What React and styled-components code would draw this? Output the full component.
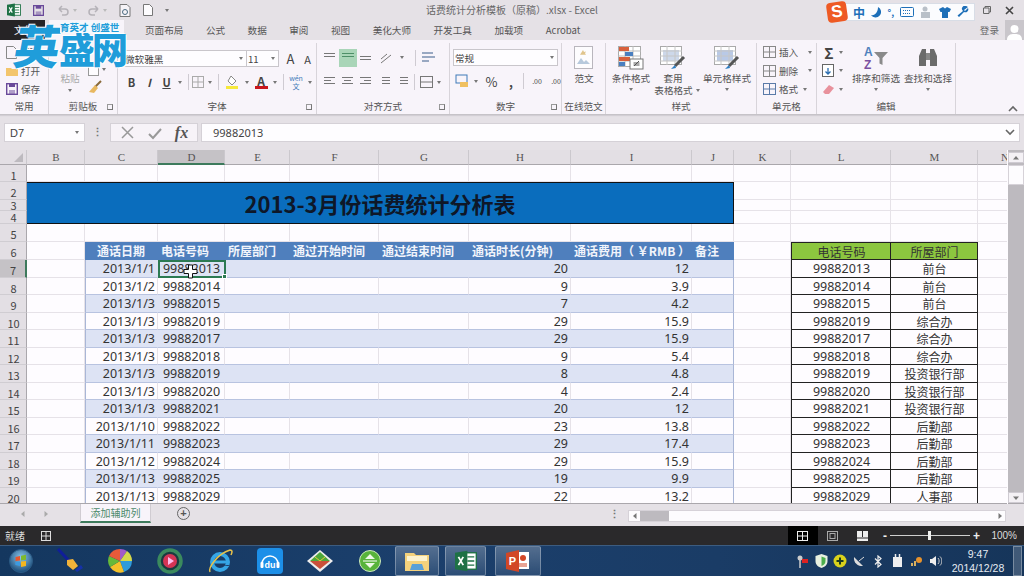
import React from "react"
import styled, { createGlobalStyle } from "styled-components"

const GlobalStyle = createGlobalStyle`
  html, body { margin: 0; padding: 0; background: #e5e1e6; }
  * { box-sizing: border-box; }
`

const CJK = `"Noto Sans CJK SC", "Noto Sans", sans-serif`

const Page = styled.div`
  position: relative;
  width: 1024px;
  height: 576px;
  overflow: hidden;
  display: flex;
  flex-direction: column;
  background: #e5e1e6;
  font-family: ${CJK};
  color: #444;
`

// title bar
const TitleBar = styled.div`
  height: 20px;
  display: flex;
  align-items: center;
  padding-left: 6px;
  position: relative;
`
const QuickIcon = styled.span`
  display: flex;
  width: ${p => p.$w || 16}px;
  margin-left: ${p => p.$ml || 0}px;
  justify-content: center;
`
const TitleText = styled.div`
  position: absolute;
  left: 0;
  right: 0;
  top: 2px;
  text-align: center;
  font-size: 10px;
  line-height: 15px;
  color: #666;
`
const WindowButtons = styled.div`
  margin-left: auto;
  display: flex;
  width: 41px;
  gap: 14px;
  align-items: center;
`

// tabs
const TabRow = styled.div`
  height: 20px;
  display: flex;
  align-items: center;
  font-size: 9.6px;
  color: #555;
`
const FileTab = styled.div`
  width: 45px;
  height: 20px;
  background: #262426;
  color: #eee;
  line-height: 20px;
  padding-left: 14px;
  font-size: 10px;
`
const ActiveTab = styled.div`
  width: 75px;
  height: 20px;
  background: #f8f4fa;
  margin-left: 4px;
  margin-right: 21px;
`
const TabList = styled.div`
  display: flex;
  gap: 22.5px;
`
const Login = styled.div`
  margin-left: auto;
  display: flex;
  align-items: center;
  gap: 6px;
  font-size: 9.6px;
  color: #666;
`
const Avatar = styled.div`
  width: 19px;
  height: 20px;
  background: #c9c6cb;
  display: flex;
  align-items: flex-end;
  justify-content: center;
`

// ribbon
const Ribbon = styled.div`
  height: 75px;
  flex: none;
  display: flex;
  background: #f8f4fa;
  padding: 3px 0 0;
  border-bottom: 1px solid #c6c3c8;
  box-shadow: 0 1px 1px #d2ced4;
  position: relative;
`
const Group = styled.div`
  width: ${p => p.$w}px;
  flex: none;
  height: 71px;
  display: flex;
  flex-direction: column;
  position: relative;
  border-right: 1px solid #d8d4da;
`
const GroupBody = styled.div`
  flex: 1;
  min-height: 0;
  display: flex;
  flex-direction: ${p => p.$dir || "row"};
  gap: ${p => p.$gap || 0}px;
  padding: ${p => p.$pad || "0"};
`
const SideStack = styled.div`
  flex: none;
  width: 28px;
  display: flex;
  flex-direction: column;
`
const GroupLabel = styled.div`
  height: 14px;
  line-height: 13px;
  text-align: center;
  font-size: 9.6px;
  color: #555;
`
const Launcher = styled.span`
  position: absolute;
  right: 4px;
  bottom: 4px;
  width: 6px;
  height: 6px;
  border-left: 1px solid #999;
  border-top: 1px solid #999;
  border-right: 1px solid #777;
  border-bottom: 1px solid #777;
`
const CmdRow = styled.div`
  display: flex;
  align-items: center;
  flex: none;
  height: ${p => p.$h || 18.5}px;
  gap: ${p => p.$gap || 0}px;
  font-size: 9.6px;
  color: #555;
`
const Slot = styled.span`
  display: flex;
  flex-direction: ${p => (p.$stack ? "column" : "row")};
  align-items: center;
  justify-content: center;
  flex: none;
  width: ${p => p.$w || 18}px;
  height: ${p => p.$h || 18}px;
  margin-left: ${p => p.$ml || 0}px;
  background: ${p => (p.$on ? "#a9d5b8" : "transparent")};
  font-size: ${p => p.$fs || 11}px;
  line-height: ${p => (p.$stack ? `${p.$lh || 11}px` : "normal")};
  font-weight: ${p => (p.$bold ? 700 : 400)};
  font-style: ${p => (p.$it ? "italic" : "normal")};
  text-decoration: ${p => (p.$ul ? "underline" : "none")};
  color: ${p => p.$color || "#444"};
`
const Caret = styled.span`
  flex: none;
  width: 0;
  height: 0;
  margin: ${p => p.$m || "0 3px"};
  border-left: 2.5px solid transparent;
  border-right: 2.5px solid transparent;
  border-top: 3px solid ${p => p.$c || "#777"};
`
const Divider = styled.span`
  flex: none;
  width: 1px;
  height: 16px;
  margin: 0 3px 0 ${p => p.$ml || 3}px;
  background: #cfcbd2;
`
const Select = styled.div`
  width: ${p => p.$w}px;
  height: 17px;
  flex: none;
  background: #fefdff;
  border: 1px solid #c9c6cb;
  border-left: ${p => (p.$joined ? "none" : "1px solid #c9c6cb")};
  display: flex;
  align-items: center;
  justify-content: space-between;
  padding: 0 3px 0 1px;
  font-size: 9.6px;
  color: #444;
`
const BigCmd = styled.div`
  width: ${p => p.$w}px;
  flex: none;
  display: flex;
  flex-direction: column;
  align-items: center;
  font-size: 9.6px;
  line-height: 12px;
  white-space: nowrap;
  color: ${p => (p.$muted ? "#aaa" : "#555")};
`
const BigIcon = styled.div`
  height: 28px;
  display: flex;
  align-items: center;
  justify-content: center;
  margin-top: 1px;
`
const CaretLine = styled.span`
  display: flex;
  align-items: center;
`
const Collapse = styled.div`
  position: absolute;
  right: 6px;
  bottom: 2px;
  display: flex;
`

// formula bar
const FormulaBar = styled.div`
  height: 35px;
  flex: none;
  padding: 8px 4px;
  display: flex;
  align-items: stretch;
  font-size: 11px;
  color: #444;
`
const NameBox = styled.div`
  width: 81px;
  background: #fefdff;
  border: 1px solid #d5d1d7;
  display: flex;
  align-items: center;
  justify-content: space-between;
  padding: 0 5px;
  font-family: "Liberation Sans", sans-serif;
`
const Dots = styled.div`
  width: 25px;
  text-align: center;
  color: #777;
  line-height: 17px;
  font-weight: 700;
`
const FxBox = styled.div`
  width: 88px;
  background: #f7f3f8;
  border: 1px solid #d5d1d7;
  display: flex;
  align-items: center;
  justify-content: space-around;
  margin-right: 3px;
  font-family: "Liberation Serif", serif;
  font-style: italic;
  font-size: 16px;
  font-weight: 700;
  color: #555;
  padding: 0 3px;
`
const FormulaInput = styled.div`
  flex: 1;
  background: #fefdff;
  border: 1px solid #d5d1d7;
  display: flex;
  align-items: center;
  justify-content: space-between;
  padding: 0 4px 0 11px;
  font-family: "Noto Sans", sans-serif;
  font-size: 11px;
`

// sheet
const SheetArea = styled.div`
  height: 354px;
  flex: none;
  display: flex;
  background: #fefcff;
`
const SheetClip = styled.div`
  width: 1007px;
  flex: none;
  overflow: hidden;
  position: relative;
  border-bottom: 1px solid #aaa7ac;
`
const Sheet = styled.div`
  display: grid;
  width: 1061px;
  grid-template-columns: 27px 58px 73px 67px 65px 89px 90px 102px 121px 42px 57px 100px 87px 54px;
  grid-template-rows: 15px 17px 18px 11px 13px 18px 18px repeat(14, 17.5px);
`
const ColHead = styled.div`
  background: ${p => (p.$on ? "#c5c2c6" : "#e3dfe4")};
  border-right: 1px solid #cbc8cd;
  border-bottom: ${p => (p.$on ? "2px solid #3d7a5c" : "1px solid #aaa7ac")};
  text-align: center;
  padding-left: 1px;
  font-family: "Liberation Serif", serif;
  font-size: 11px;
  line-height: 15px;
  color: #555;
`
const Corner = styled(ColHead)`
  display: flex;
  justify-content: flex-end;
  align-items: flex-end;
  padding: 0 3px 2px 0;
`
const RowHead = styled.div`
  background: ${p => (p.$on ? "#c5c2c6" : "#e3dfe4")};
  border-right: ${p => (p.$on ? "2px solid #3d7a5c" : "1px solid #aaa7ac")};
  border-bottom: 1px solid #d0cdd2;
  text-align: center;
  font-size: 11px;
  line-height: ${p => p.$lh || 18}px;
  padding-left: 1px;
  padding-top: ${p => (p.$lh ? 0 : 1)}px;
  color: #444;
`
const Cell = styled.div`
  border-right: 1px solid #e6e2e8;
  border-bottom: 1px solid #e6e2e8;
  overflow: hidden;
  white-space: nowrap;
  font-size: 12.5px;
  line-height: 17px;
  color: #333;
  font-family: "Noto Sans", sans-serif;
  text-align: ${p => p.$align || "left"};
  padding: 0 2px 0 3px;
`
const Banner = styled.div`
  grid-column: span 9;
  grid-row: span 3;
  background: #0a6dbd;
  border: 1.5px solid #111;
  border-left: none;
  display: flex;
  align-items: center;
  justify-content: center;
  font-size: 22px;
  font-weight: 700;
  color: #0e1728;
`
const HeadCell = styled(Cell)`
  background: #4f7fbd;
  color: #f1f4fb;
  font-family: ${CJK};
  font-size: 12px;
  font-weight: 700;
  padding: 0 0 0 ${p => p.$indent || 3}px;
  border-color: #4f7fbd;
`
const BodyCell = styled(Cell)`
  background: ${p => (p.$alt ? "#dde3f4" : "#fefcff")};
  border-bottom: 1px solid #b8c3e0;
  border-right: 1px solid ${p => (p.$alt ? "#dde3f4" : "#e6e2e8")};
  border-left: ${p => (p.$first ? "1px solid #a9b6d6" : "none")};
  ${p => p.$last && "border-right: 1px solid #a9b6d6;"}
`
const LookupHead = styled(Cell)`
  background: #8cc63f;
  font-family: ${CJK};
  font-size: 12px;
  color: #333;
  text-align: center;
  border: 1px solid #222;
  border-left: ${p => (p.$first ? "1px solid #222" : "none")};
`
const LookupCell = styled(Cell)`
  text-align: center;
  font-family: ${p => (p.$cjk ? CJK : `"Noto Sans", sans-serif`)};
  font-size: ${p => (p.$cjk ? 12 : 12.5)}px;
  border-right: 1px solid #222;
  border-bottom: 1px solid #222;
  border-left: ${p => (p.$first ? "1px solid #222" : "none")};
`
const Selection = styled.div`
  position: absolute;
  left: 158px;
  top: 110px;
  width: 68px;
  height: 18px;
  border: 2px solid #2c7a52;
  pointer-events: none;
`
const Handle = styled.span`
  position: absolute;
  right: -3px;
  bottom: -3px;
  width: 5px;
  height: 5px;
  background: #2c7a52;
  border: 1px solid #fff;
`
const CursorWrap = styled.div`
  position: absolute;
  left: 183px;
  top: 114px;
  display: flex;
`

// scroll bars
const VScroll = styled.div`
  flex: 1;
  margin-left: 1px;
  display: flex;
  flex-direction: column;
  background: #bdbabf;
  padding-top: 2px;
  border-bottom: 1px solid #aaa7ac;
`
const ScrollBtn = styled.div`
  height: 11px;
  flex: none;
  background: #f4f1f5;
  border: 1px solid #cfcbd2;
  display: flex;
  align-items: center;
  justify-content: center;
`
const VThumb = styled.div`
  height: 20px;
  flex: none;
  background: #fdfcfe;
  border: 1px solid #d6d2d8;
  margin-top: 2px;
`
const Spacer = styled.div`
  flex: 1;
`
const TabBar = styled.div`
  height: 22px;
  flex: none;
  display: flex;
  align-items: flex-start;
  background: #e5e1e6;
`
const Arrows = styled.div`
  width: 80px;
  display: flex;
  gap: 17px;
  height: 20px;
  align-items: center;
  padding-left: 20px;
`
const SheetTab = styled.div`
  width: 71px;
  height: 19px;
  background: #f8f4fa;
  border-bottom: 2px solid #3d7a5c;
  border-left: 1px solid #d0ccd2;
  border-right: 1px solid #d0ccd2;
  text-align: center;
  font-size: 10px;
  line-height: 17px;
  color: #4c8a6b;
`
const AddSheet = styled.div`
  margin: 3px 0 0 26px;
  width: 13px;
  height: 13px;
  border-radius: 50%;
  border: 1px solid #666;
  color: #555;
  display: flex;
  align-items: center;
  justify-content: center;
  font-size: 11px;
  line-height: 11px;
  font-family: "Liberation Sans", sans-serif;
  font-weight: 700;
`
const TabDots = styled.div`
  margin: 0 3px 0 414px;
  width: 21px;
  text-align: center;
  color: #777;
  font-size: 11px;
  line-height: 19px;
  font-weight: 700;
`
const HScroll = styled.div`
  width: 378px;
  height: 12px;
  margin-top: 6px;
  background: #fdfcfe;
  border: 1px solid #d6d2d8;
  display: flex;
  align-items: center;
`
const HBtn = styled.span`
  width: 11px;
  height: 10px;
  flex: none;
  display: flex;
  align-items: center;
  justify-content: center;
`
const HThumb = styled.span`
  width: 29px;
  height: 10px;
  flex: none;
  background: #bdbabf;
`

// status bar
const StatusBar = styled.div`
  height: 19px;
  flex: none;
  background: #2a292b;
  display: flex;
  align-items: center;
  padding-left: 5px;
  color: #ddd;
  font-size: 10px;
`
const MacroIcon = styled.span`
  display: flex;
  margin-left: 16px;
`
const ViewBtn = styled.div`
  width: ${p => p.$w || 30}px;
  height: 19px;
  background: ${p => (p.$on ? "#000" : "transparent")};
  display: flex;
  align-items: center;
  justify-content: center;
`
const ZoomSlider = styled.div`
  width: 80px;
  height: 1px;
  background: #cfcfcf;
  position: relative;
  margin: 0 3px;
`
const ZoomThumb = styled.span`
  position: absolute;
  left: 38px;
  top: -4px;
  width: 3px;
  height: 9px;
  background: #f0f0f0;
`
const ZoomText = styled.div`
  width: 44px;
  text-align: right;
  padding-right: 7px;
  font-family: "Liberation Sans", sans-serif;
  font-size: 10px;
`
const ZoomSign = styled.span`
  margin-left: ${p => p.$ml || 0}px;
  color: #eee;
  font-family: "Liberation Sans", sans-serif;
  font-size: 12px;
  font-weight: 700;
  line-height: 12px;
`

// taskbar
const Taskbar = styled.div`
  flex: 1;
  display: flex;
  align-items: center;
  background: linear-gradient(90deg, #14375f 0%, #1b3f6c 40%, #1a3c66 70%, #16355a 100%);
  border-top: 1px solid #3c5c80;
  padding-left: 6px;
`
const TaskSlot = styled.div`
  width: ${p => p.$w || 50}px;
  margin-right: ${p => p.$mr || 0}px;
  height: 30px;
  flex: none;
  display: flex;
  align-items: center;
  justify-content: center;
  ${p => p.$pinned && `
    background: linear-gradient(180deg, rgba(255,255,255,.25), rgba(255,255,255,.08));
    border: 1px solid rgba(255,255,255,.3);
    border-radius: 2px;
  `}
`
const Tray = styled.div`
  margin-left: auto;
  display: flex;
  align-items: center;
  gap: 3px;
`
const TrayIcon = styled.span`
  display: flex;
  width: 16px;
  justify-content: center;
`
const Clock = styled.div`
  width: 64px;
  text-align: center;
  color: #e6ebf2;
  font-family: "Liberation Sans", sans-serif;
  font-size: 10.5px;
  line-height: 14px;
`
const ShowDesktop = styled.div`
  width: 9px;
  height: 30px;
  margin-right: 2px;
  background: rgba(255,255,255,.18);
  border: 1px solid rgba(255,255,255,.3);
`

// overlays
const Logo = styled.div`
  position: absolute;
  left: 15px;
  top: 18px;
  width: 112px;
  height: 50px;
  color: #1f9dda;
  font-family: ${CJK};
  font-weight: 900;
  pointer-events: none;
`
const LogoBig = styled.span`
  position: absolute;
  left: ${p => p.$x}px;
  top: ${p => p.$y}px;
  font-size: ${p => p.$s}px;
  line-height: ${p => p.$s}px;
  transform: ${p => (p.$slant ? "skewX(-10deg)" : "none")};
  text-shadow: 1px 1px 0 #fff, -1px -1px 0 #fff;
`
const LogoSmall = styled.span`
  position: absolute;
  left: 45px;
  top: 4px;
  font-size: 9.5px;
  line-height: 11px;
  font-weight: 700;
  white-space: nowrap;
  background: #f4f9fc;
`
const Sogou = styled.div`
  position: absolute;
  left: 827px;
  top: 2px;
  width: 148px;
  height: 20px;
  display: flex;
  align-items: center;
  pointer-events: none;
`
const SogouMark = styled.div`
  width: 20px;
  height: 20px;
  border-radius: 4px;
  background: #ee5a24;
  color: #fff;
  font-family: "Liberation Sans", sans-serif;
  font-weight: 700;
  font-size: 17px;
  line-height: 19px;
  text-align: center;
  transform: rotate(-8deg);
  flex: none;
  z-index: 1;
`
const SogouBar = styled.div`
  flex: 1;
  height: 18px;
  margin-left: -2px;
  background: #fbfcfe;
  border: 1px solid #d8dde6;
  display: flex;
  align-items: center;
  justify-content: space-around;
  padding: 0 2px 0 4px;
  color: #1d6fb8;
  font-size: 12px;
  font-weight: 700;
`
const SogouPunct = styled.span`
  font-size: 9px;
`

// icons
const Svg = ({ w = 14, h = 14, vb, children }) => (
  <svg width={w} height={h} viewBox={vb || `0 0 ${w} ${h}`} fill="none">{children}</svg>
)
const Lines = ({ widths, on }) => (
  <Svg w={14} h={12}>
    {widths.map(([x, w], i) => (
      <rect key={i} x={x} y={1 + i * 3} width={w} height="1" fill={on ? "#4d8f68" : "#777"} />
    ))}
  </Svg>
)
const Save = ({ c = "#6a4a9a", s = 12 }) => (
  <Svg w={s} h={s} vb="0 0 12 12">
    <rect x=".7" y=".7" width="10.6" height="10.6" stroke={c} strokeWidth="1.4" />
    <rect x="3" y="1" width="6" height="3" fill={c} />
    <rect x="3" y="7" width="6" height="4" fill={c} opacity=".5" />
  </Svg>
)
const SmallGrid = ({ w = 14, h = 14, c = "#888", fill }) => (
  <Svg w={w} h={h}>
    <rect x=".5" y=".5" width={w - 1} height={h - 1} stroke={c} fill={fill || "none"} />
    <path d={`M${w / 2} 0V${h}M0 ${h / 2}H${w}`} stroke={c} />
  </Svg>
)
const ExcelMark = ({ s = 14 }) => (
  <Svg w={s} h={s} vb="0 0 16 16">
    <rect x="7" y="2" width="8.5" height="12" fill="#fff" stroke="#1e7145" />
    <path d="M9 5h5M9 8h5M9 11h5" stroke="#1e7145" />
    <path d="M0 2l9-1.5v15L0 14z" fill="#1e7145" />
    <path d="M2.5 5l3.5 6M6 5l-3.5 6" stroke="#fff" strokeWidth="1.3" />
  </Svg>
)
const Chevron = ({ up, c = "#666" }) => (
  <Svg w={10} h={7}>
    <path d={up ? "M1 6l4-4 4 4" : "M1 1l4 4 4-4"} stroke={c} strokeWidth="1.6" />
  </Svg>
)
const Tri = ({ dir, c = "#777" }) => (
  <Svg w={6} h={6}>
    <path d={dir === "l" ? "M4.5 0v6L1 3z" : dir === "r" ? "M1.5 0v6L5 3z" : dir === "u" ? "M0 4.5h6L3 1z" : "M0 1.5h6L3 5z"} fill={c} />
  </Svg>
)
const ConditionIcon = () => (
  <Svg w={26} h={24}>
    <rect x=".5" y=".5" width="22" height="20" stroke="#aaa" fill="#fff" />
    <path d="M0 5h23M0 10h23M0 15h23M7 0v21M15 0v21" stroke="#bbb" />
    <rect x="1" y="1" width="10" height="4" fill="#d8603c" />
    <rect x="7" y="6" width="8" height="4" fill="#4a7fc0" />
    <rect x="1" y="11" width="11" height="4" fill="#d8603c" />
    <rect x="1" y="16" width="6" height="4" fill="#4a7fc0" />
    <rect x="12" y="13" width="13" height="10" fill="#fff" stroke="#777" />
    <path d="M16 20l5-5M15.5 17h6M15.5 19h6" stroke="#555" />
  </Svg>
)
const TableIcon = ({ band }) => (
  <Svg w={26} h={24}>
    <rect x=".5" y=".5" width="21" height="18" stroke="#aaa" fill="#fff" />
    <rect x="3" y="4" width="16" height="11" fill={band ? "#b9c9e6" : "#cdd8ea"} />
    <path d="M0 5h22M0 10h22M0 15h22M7 0v19M15 0v19" stroke="#c6c6c6" />
    <path d="M24 11l-9 9" stroke="#555" strokeWidth="3" />
    <path d="M15 19l-4 4 5-1z" fill="#2a7cc0" />
  </Svg>
)
const EssayIcon = () => (
  <Svg w={20} h={24}>
    <rect x=".5" y=".5" width="18" height="22" stroke="#b9b6bd" fill="#fdfcfe" />
    <path d="M9 4l1 2 2-.4-1 1.6 1 1.6H6" fill="#e0c48c" />
    <path d="M3 18l4-6 3 4 2-2 4 4z" fill="#b7c9dc" />
  </Svg>
)
const Binoculars = () => (
  <Svg w={22} h={20}>
    <path d="M2 18V8l3-7h4v17zM20 18V8l-3-7h-4v17z" fill="#6b6b6b" />
    <rect x="9" y="5" width="4" height="7" fill="#888" />
  </Svg>
)
const SortIcon = () => (
  <Svg w={26} h={26}>
    <text x="1" y="11" fontFamily="Liberation Sans" fontSize="12" fontWeight="700" fill="#4f81bd">A</text>
    <text x="1" y="24" fontFamily="Liberation Sans" fontSize="12" fontWeight="700" fill="#7a4fa0">Z</text>
    <path d="M11 7h14l-5.500 6v7l-3-1.500V13z" fill="#8a8a8a" />
  </Svg>
)
const Orb = () => (
  <svg width="24" height="24" viewBox="0 0 24 24">
    <defs>
      <radialGradient id="orb" cx=".5" cy=".35" r=".7">
        <stop offset="0" stopColor="#8cc8ee" />
        <stop offset="1" stopColor="#11416f" />
      </radialGradient>
    </defs>
    <circle cx="12" cy="12" r="11.500" fill="url(#orb)" stroke="#2c5b85" />
    <path d="M6.500 8l4.500-1v4.500l-4.500.6z" fill="#e7562e" />
    <path d="M12 6.800l5-1v5l-5 .6z" fill="#7fba2c" />
    <path d="M6.300 13l4.700-.6v4.600l-4.700-1z" fill="#3d9be0" />
    <path d="M12 12.400l5-.5v5.100l-5 1z" fill="#f3b61f" />
  </svg>
)
const PenHand = () => (
  <Svg w={28} h={26}>
    <path d="M2 1l12 13" stroke="#101e9a" strokeWidth="3" />
    <path d="M11 12l6-1 5 7-5 4-6-5z" fill="#f1b23a" />
    <path d="M19 22l6-5 2 3-6 4z" fill="#1531a8" />
  </Svg>
)
const Ball = () => (
  <Svg w={26} h={26}>
    <path d="M13 1a12 12 0 0 1 7 2L13 13z" fill="#a25ac8" />
    <path d="M20 3a12 12 0 0 1 5 10H13z" fill="#d5d84a" />
    <path d="M25 13a12 12 0 0 1-8 11l-4-11z" fill="#2f9bdb" />
    <path d="M17 24a12 12 0 0 1-14-5l10-6z" fill="#f3c12a" />
    <path d="M3 19A12 12 0 0 1 2 8l11 5z" fill="#65b93a" />
    <path d="M2 8a12 12 0 0 1 11-7v12z" fill="#e85a3a" />
  </Svg>
)
const Rec = () => (
  <Svg w={26} h={26}>
    <circle cx="13" cy="13" r="11" stroke="#3b8a5e" strokeWidth="3.500" fill="#1a3a40" />
    <circle cx="13" cy="13" r="7" fill="#d43455" />
    <path d="M11 9l6 4-6 4z" fill="#fbe" />
  </Svg>
)
const IE = () => (
  <Svg w={26} h={26}>
    <circle cx="13" cy="14" r="8" stroke="#35a6e6" strokeWidth="4" />
    <path d="M5 14h16" stroke="#35a6e6" strokeWidth="3" />
    <path d="M21 17l3 1H14l7-1z" fill="#1a3c66" />
    <path d="M3 24C1 20 10 6 23 2c3 0 2 3 1 5" stroke="#e8c24a" strokeWidth="1.500" />
  </Svg>
)
const Du = () => (
  <svg width="26" height="26" viewBox="0 0 26 26">
    <rect width="26" height="26" rx="4" fill="#1c8fe8" />
    <path d="M5 16a8 8 0 0 1 16 0" stroke="#fff" strokeWidth="1.500" fill="none" />
    <rect x="3.500" y="14" width="3" height="6" rx="1" fill="#fff" />
    <rect x="19.500" y="14" width="3" height="6" rx="1" fill="#fff" />
    <text x="13" y="20" textAnchor="middle" fontFamily="Liberation Sans" fontSize="9" fontWeight="700" fill="#fff">du</text>
  </svg>
)
const Diamond = () => (
  <Svg w={26} h={22}>
    <path d="M13 0l13 11-13 11L0 11z" fill="#eee" />
    <path d="M13 2l10 9H3z" fill="#4da83a" />
    <path d="M3 11h20l-10 8z" fill="#c8503a" />
    <path d="M8 7l5 4 5-4" stroke="#e8c83a" />
  </Svg>
)
const GreenRound = () => (
  <Svg w={24} h={24}>
    <circle cx="12" cy="12" r="10.500" fill="#58b33b" stroke="#cdeabc" />
    <path d="M7 10l5-5 5 5zM7 14l5 5 5-5z" fill="#eef8e8" />
    <path d="M5 12h14" stroke="#fff" />
  </Svg>
)
const Folder = () => (
  <Svg w={26} h={22}>
    <path d="M1 3h9l2 2h13v16H1z" fill="#f5d27c" />
    <path d="M3 6h20v5H3z" fill="#fdf3cf" />
    <path d="M8 14h10l2 6H6z" fill="#5aa0d8" />
  </Svg>
)
const Ppt = () => (
  <Svg w={24} h={22}>
    <rect x="10" y="2" width="13" height="17" fill="#fff" />
    <circle cx="17" cy="8" r="3" fill="#d24726" />
    <path d="M12 14h9M12 16h9" stroke="#d24726" />
    <path d="M0 3l13-3v22L0 19z" fill="#d24726" />
    <text x="6.500" y="15" textAnchor="middle" fontFamily="Liberation Sans" fontSize="11" fontWeight="700" fill="#fff">P</text>
  </Svg>
)
const Cross = () => (
  <Svg w={15} h={15}>
    <path d="M5.500 1h4v4.500H14v4H9.500V14h-4V9.500H1v-4h4.500z" fill="#fff" stroke="#111" />
  </Svg>
)

const columns = ["B", "C", "D", "E", "F", "G", "H", "I", "J", "K", "L", "M", "N"]
const headers = ["通话日期", "电话号码", "所屋部门", "通过开始时间", "通过结束时间", "通话时长(分钟)", "通话费用（ ￥RMB ）", "备注"]
const rows = [
  ["2013/1/1", "99882013", 20, 12, "前台"],
  ["2013/1/2", "99882014", 9, 3.9, "前台"],
  ["2013/1/3", "99882015", 7, 4.2, "前台"],
  ["2013/1/3", "99882019", 29, 15.9, "综合办"],
  ["2013/1/3", "99882017", 29, 15.9, "综合办"],
  ["2013/1/3", "99882018", 9, 5.4, "综合办"],
  ["2013/1/3", "99882019", 8, 4.8, "投资银行部"],
  ["2013/1/3", "99882020", 4, 2.4, "投资银行部"],
  ["2013/1/3", "99882021", 20, 12, "投资银行部"],
  ["2013/1/10", "99882022", 23, 13.8, "后勤部"],
  ["2013/1/11", "99882023", 29, 17.4, "后勤部"],
  ["2013/1/12", "99882024", 29, 15.9, "后勤部"],
  ["2013/1/13", "99882025", 19, 9.9, "后勤部"],
  ["2013/1/13", "99882029", 22, 13.2, "人事部"],
]
const tabs = ["页面布局", "公式", "数据", "审阅", "视图", "美化大师", "开发工具", "加载项", "Acrobat"]

const Blank = ({ n }) => Array.from({ length: n }, (_, i) => <Cell key={i} />)

const SheetGrid = () => (
  <Sheet>
    <Corner><Svg w={9} h={9}><path d="M9 0v9H0z" fill="#bdbabf" /></Svg></Corner>
    {columns.map(c => <ColHead key={c} $on={c === "D"}>{c}</ColHead>)}

    <RowHead>1</RowHead><Blank n={13} />
    <RowHead>2</RowHead>
    <Banner>2013-3月份话费统计分析表</Banner>
    <Blank n={4} />
    <RowHead $lh={11}>3</RowHead><Blank n={4} />
    <RowHead $lh={12}>4</RowHead><Blank n={4} />
    <RowHead>5</RowHead><Blank n={13} />

    <RowHead>6</RowHead>
    <Cell />
    {headers.map((h, i) => <HeadCell key={h} $indent={i === 0 ? 12 : 3}>{h}</HeadCell>)}
    <Cell />
    <LookupHead $first>电话号码</LookupHead>
    <LookupHead>所屋部门</LookupHead>
    <Cell />

    {rows.map((r, i) => {
      const alt = i % 2 === 0
      return (
        <React.Fragment key={i}>
          <RowHead $on={i === 0}>{i + 7}</RowHead>
          <Cell />
          <BodyCell $alt={alt} $first $align="right">{r[0]}</BodyCell>
          <BodyCell $alt={alt} $align="center">{r[1]}</BodyCell>
          <BodyCell $alt={alt} />
          <BodyCell $alt={alt} />
          <BodyCell $alt={alt} />
          <BodyCell $alt={alt} $align="right">{r[2]}</BodyCell>
          <BodyCell $alt={alt} $align="right">{r[3]}</BodyCell>
          <BodyCell $alt={alt} $last />
          <Cell />
          <LookupCell $first>{r[1]}</LookupCell>
          <LookupCell $cjk>{r[4]}</LookupCell>
          <Cell />
        </React.Fragment>
      )
    })}
  </Sheet>
)

export default function App() {
  return (
    <Page>
      <GlobalStyle />
      <TitleBar>
        <QuickIcon><ExcelMark /></QuickIcon>
        <QuickIcon $ml={8}><Save s={11} /></QuickIcon>
        <QuickIcon $ml={9}><Svg w={13} h={11}><path d="M2 4h6a3 3 0 0 1 0 6H5M2 4l3-3M2 4l3 3" stroke="#b5b2b8" strokeWidth="1.500" /></Svg></QuickIcon>
        <QuickIcon $w={8}><Caret $m="0" $c="#bbb" /></QuickIcon>
        <QuickIcon $ml={6}><Svg w={13} h={11}><path d="M11 4H5a3 3 0 0 0 0 6h3M11 4L8 1M11 4L8 7" stroke="#b5b2b8" strokeWidth="1.500" /></Svg></QuickIcon>
        <QuickIcon $w={8}><Caret $m="0" $c="#bbb" /></QuickIcon>
        <QuickIcon $ml={8}><Svg w={12} h={13}><path d="M1 .5h7l3 3v9H1z" stroke="#777" fill="#f6f3f7" /><circle cx="6" cy="8" r="2.500" stroke="#4a6a80" /></Svg></QuickIcon>
        <QuickIcon $ml={10} $w={10}><Svg w={10} h={12}><path d="M.5.5h6l3 3v8h-9z" stroke="#777" fill="#fdfcfe" /></Svg></QuickIcon>
        <QuickIcon $ml={10} $w={8}><Caret $m="0" /></QuickIcon>
        <TitleText>话费统计分析模板（原稿）.xlsx - Excel</TitleText>
        <WindowButtons>
          <Svg w={8} h={8}><path d="M2 2V.5h5.500V6H6M.5 2H6v5.500H.5z" stroke="#666" /></Svg>
          <Svg w={9} h={9}><path d="M1 1l7 7M8 1L1 8" stroke="#444" strokeWidth="1.600" /></Svg>
        </WindowButtons>
      </TitleBar>

      <TabRow>
        <FileTab>文件</FileTab>
        <ActiveTab />
        <TabList>{tabs.map(t => <span key={t}>{t}</span>)}</TabList>
        <Login>
          登录
          <Avatar><Svg w={15} h={17}><circle cx="7.500" cy="6" r="4" fill="#fff" /><path d="M0 17c0-5 3-6 7.500-6s7.500 1 7.500 6z" fill="#fff" /></Svg></Avatar>
        </Login>
      </TabRow>

      <Ribbon>
        <Group $w={49}>
          <GroupBody $dir="column" $pad="0 0 0 6px">
            <CmdRow $gap={3}><Svg w={11} h={13}><path d="M.5.5h7l3 3v9H.5z" stroke="#888" /></Svg>新建</CmdRow>
            <CmdRow $gap={3}><Svg w={12} h={10}><path d="M0 2h5l1 1h6v7H0z" fill="#f3c56c" /></Svg>打开</CmdRow>
            <CmdRow $gap={3}><Save /> 保存</CmdRow>
          </GroupBody>
          <GroupLabel>常用</GroupLabel>
        </Group>

        <Group $w={69}>
          <GroupBody $pad="0 0 0 6px">
            <BigCmd $w={30} $muted>
              <BigIcon />粘贴<Caret $m="5px 0 0" />
            </BigCmd>
            <GroupBody $dir="column" $pad="20px 0 0 3px" $gap={4}>
              <CmdRow $h={13}><Svg w={11} h={13}><rect x=".5" y="2.500" width="10" height="10" stroke="#999" fill="#fdfcfe" /><rect x="3" y="1" width="5" height="3" fill="#7a8fb0" /></Svg><Caret /></CmdRow>
              <CmdRow $h={14}><Svg w={14} h={14}><path d="M13 1L7 7" stroke="#8a6a3a" strokeWidth="2" /><path d="M7 5l3 3-4 5-5-1z" fill="#e8b860" /></Svg></CmdRow>
            </GroupBody>
          </GroupBody>
          <GroupLabel>剪贴板</GroupLabel>
          <Launcher />
        </Group>

        <Group $w={199}>
          <GroupBody $dir="column" $pad="7px 0 0 5px" $gap={6}>
            <CmdRow $h={17}>
              <Select $w={124}>微软雅黑<Caret $m="0" /></Select>
              <Select $w={32} $joined>11<Caret $m="0" /></Select>
              <Slot $w={17} $fs={13} $ml={3}>A</Slot>
              <Slot $w={17} $fs={11}>A</Slot>
            </CmdRow>
            <CmdRow $h={18}>
              <Slot $w={17} $bold>B</Slot>
              <Slot $w={18} $it $bold>I</Slot>
              <Slot $w={17} $bold $ul>U</Slot>
              <Caret />
              <Divider />
              <SmallGrid w={12} h={12} c="#aaa" />
              <Caret $m="0 3px 0 4px" />
              <Divider />
              <Slot $w={20}><Svg w={14} h={14}><path d="M6 1l5 5-4 4-4-4z" stroke="#888" fill="#fff" /><rect x="1" y="11" width="12" height="3" fill="#f6e93c" /></Svg></Slot>
              <Caret />
              <Slot $w={18} $fs={12} $stack $bold>A<Svg w={13} h={3}><rect width="13" height="3" fill="#c9161d" /></Svg></Slot>
              <Caret />
              <Divider />
              <Slot $w={18} $fs={7} $stack $lh={8} $color="#3f7ab8">wén<span>文</span></Slot>
              <Caret />
            </CmdRow>
          </GroupBody>
          <GroupLabel>字体</GroupLabel>
          <Launcher />
        </Group>

        <Group $w={133}>
          <GroupBody $dir="column" $pad="5px 0 0 4px" $gap={7}>
            <CmdRow $h={19}>
              <Slot $w={18}><Lines widths={[[1, 11], [1, 11]]} /></Slot>
              <Slot $w={18} $on><Lines widths={[[1, 12], [1, 12]]} on /></Slot>
              <Slot $w={18}><Lines widths={[[0, 0], [1, 11], [1, 11]]} /></Slot>
              <Slot $w={22}><Svg w={13} h={12}><path d="M1 11l10-8M1 7l6-5" stroke="#777" /></Svg></Slot>
              <Caret />
              <Divider $ml={8} />
              <Slot $w={20}><Svg w={14} h={12}><path d="M0 1h11M0 5h13M0 9h7" stroke="#7a8fb0" strokeWidth="1.300" /></Svg></Slot>
            </CmdRow>
            <CmdRow $h={16}>
              <Slot $w={18}><Lines widths={[[1, 11], [1, 7], [1, 11]]} /></Slot>
              <Slot $w={18}><Lines widths={[[1, 11], [3, 7], [1, 11]]} /></Slot>
              <Slot $w={18}><Lines widths={[[1, 11], [5, 7], [1, 11]]} /></Slot>
              <Slot $w={18}><Lines widths={[[5, 8], [5, 8], [5, 8]]} /></Slot>
              <Slot $w={18}><Lines widths={[[5, 8], [5, 8], [5, 8]]} /></Slot>
              <Divider />
              <Slot $w={16}><Svg w={13} h={12}><rect x=".5" y=".5" width="12" height="11" stroke="#777" /><path d="M0 6h13" stroke="#777" /></Svg></Slot>
              <Caret />
            </CmdRow>
          </GroupBody>
          <GroupLabel>对齐方式</GroupLabel>
          <Launcher />
        </Group>

        <Group $w={112}>
          <GroupBody $dir="column" $pad="6px 0 0 3px" $gap={6}>
            <CmdRow $h={17}><Select $w={105}>常规<Caret $m="0" /></Select></CmdRow>
            <CmdRow $h={18}>
              <Slot $w={18}><Svg w={14} h={14}><rect x="1" y="1" width="11" height="8" stroke="#3f7ab8" /><rect x="5" y="8" width="8" height="5" fill="#f0c060" /></Svg></Slot>
              <Caret />
              <Slot $w={21} $fs={13}>%</Slot>
              <Slot $w={18} $fs={12} $bold>,</Slot>
              <Divider />
              <Slot $w={20} $fs={7}>.00</Slot>
              <Slot $w={18} $fs={7}>.00</Slot>
            </CmdRow>
          </GroupBody>
          <GroupLabel>数字</GroupLabel>
          <Launcher />
        </Group>

        <Group $w={44}>
          <GroupBody $dir="column">
            <BigCmd $w={44}><BigIcon><EssayIcon /></BigIcon>范文</BigCmd>
          </GroupBody>
          <GroupLabel>在线范文</GroupLabel>
        </Group>

        <Group $w={151}>
          <GroupBody $pad="0 0 0 2px">
            <BigCmd $w={46}><BigIcon><ConditionIcon /></BigIcon>条件格式<Caret $m="4px 0 0" /></BigCmd>
            <BigCmd $w={38}><BigIcon><TableIcon /></BigIcon>套用<CaretLine>表格格式<Caret $m="0 -8px 0 3px" /></CaretLine></BigCmd>
            <BigCmd $w={70}><BigIcon><TableIcon band /></BigIcon>单元格样式<Caret $m="4px 0 0" /></BigCmd>
          </GroupBody>
          <GroupLabel>样式</GroupLabel>
        </Group>

        <Group $w={60}>
          <GroupBody $dir="column" $pad="0 0 0 6px">
            <CmdRow $gap={3}><SmallGrid w={13} h={12} /> 插入<Caret $m="0 0 0 7px" /></CmdRow>
            <CmdRow $gap={3}><SmallGrid w={13} h={12} /> 删除<Caret $m="0 0 0 7px" /></CmdRow>
            <CmdRow $gap={3}><SmallGrid w={13} h={12} c="#5a7aa8" /> 格式<Caret $m="0 0 0 2px" /></CmdRow>
          </GroupBody>
          <GroupLabel>单元格</GroupLabel>
        </Group>

        <Group $w={139}>
          <GroupBody $pad="0 0 0 5px">
            <SideStack>
              <CmdRow><Slot $w={14} $fs={15} $bold>Σ</Slot><Caret /></CmdRow>
              <CmdRow><Svg w={12} h={13}><rect x=".5" y=".5" width="11" height="12" stroke="#666" fill="#fff" /><path d="M6 4v6M3.500 7.500L6 10l2.500-2.500" stroke="#2a6cb0" strokeWidth="1.300" /></Svg><Caret $m="0 3px 0 5px" /></CmdRow>
              <CmdRow><Svg w={13} h={11}><path d="M1 8l6-7 5 3-5 6H3z" fill="#e8919c" /></Svg><Caret $m="0 3px 0 4px" /></CmdRow>
            </SideStack>
            <BigCmd $w={52}><BigIcon><SortIcon /></BigIcon>排序和筛选<Caret $m="4px 0 0" /></BigCmd>
            <BigCmd $w={52}><BigIcon><Binoculars /></BigIcon>查找和选择<Caret $m="4px 0 0" /></BigCmd>
          </GroupBody>
          <GroupLabel>编辑</GroupLabel>
        </Group>

        <Collapse><Chevron up /></Collapse>
      </Ribbon>

      <FormulaBar>
        <NameBox>D7<Caret $m="0" /></NameBox>
        <Dots>⋮</Dots>
        <FxBox>
          <Svg w={16} h={14}><path d="M2 1l11 11M13 1L2 12" stroke="#999" strokeWidth="1.500" /></Svg>
          <Svg w={16} h={14}><path d="M2 8l4 4 8-9" stroke="#999" strokeWidth="2" /></Svg>
          <span>fx</span>
        </FxBox>
        <FormulaInput>99882013<Chevron /></FormulaInput>
      </FormulaBar>

      <SheetArea>
        <SheetClip>
          <SheetGrid />
          <Selection><Handle /></Selection>
          <CursorWrap><Cross /></CursorWrap>
        </SheetClip>
        <VScroll>
          <ScrollBtn><Tri dir="u" /></ScrollBtn>
          <VThumb />
          <Spacer />
          <ScrollBtn><Tri dir="d" /></ScrollBtn>
        </VScroll>
      </SheetArea>

      <TabBar>
        <Arrows><Tri dir="l" c="#aaa" /><Tri dir="r" c="#aaa" /></Arrows>
        <SheetTab>添加辅助列</SheetTab>
        <AddSheet>+</AddSheet>
        <TabDots>⋮</TabDots>
        <HScroll>
          <HBtn><Tri dir="l" /></HBtn>
          <HThumb />
          <Spacer />
          <HBtn><Tri dir="r" /></HBtn>
        </HScroll>
      </TabBar>

      <StatusBar>
        就绪
        <MacroIcon><SmallGrid w={10} h={10} c="#ddd" /></MacroIcon>
        <Spacer />
        <ViewBtn $on><SmallGrid w={11} h={10} c="#eee" /></ViewBtn>
        <ViewBtn><Svg w={11} h={10}><rect x=".5" y=".5" width="10" height="9" stroke="#aaa" /><rect x="3" y="2.500" width="5" height="5" stroke="#aaa" /></Svg></ViewBtn>
        <ViewBtn><Svg w={11} h={10}><rect width="11" height="10" fill="#eee" /><path d="M5.500 0v6M0 7h11" stroke="#2a292b" /></Svg></ViewBtn>
        <ZoomSign $ml={5}>-</ZoomSign>
        <ZoomSlider><ZoomThumb /></ZoomSlider>
        <ZoomSign>+</ZoomSign>
        <ZoomText>100%</ZoomText>
      </StatusBar>

      <Taskbar>
        <TaskSlot $w={30} $mr={9}><Orb /></TaskSlot>
        <TaskSlot><PenHand /></TaskSlot>
        <TaskSlot><Ball /></TaskSlot>
        <TaskSlot><Rec /></TaskSlot>
        <TaskSlot><IE /></TaskSlot>
        <TaskSlot><Du /></TaskSlot>
        <TaskSlot><Diamond /></TaskSlot>
        <TaskSlot><GreenRound /></TaskSlot>
        <TaskSlot $w={44} $mr={6} $pinned><Folder /></TaskSlot>
        <TaskSlot $w={41} $mr={9} $pinned><ExcelMark s={22} /></TaskSlot>
        <TaskSlot $w={46} $pinned><Ppt /></TaskSlot>
        <Tray>
          <TrayIcon><Svg w={12} h={14}><circle cx="4" cy="4" r="2.500" fill="#ccc" /><path d="M4 6v8" stroke="#ccc" strokeWidth="1.500" /><rect x="6" y="5" width="6" height="4" fill="#d22" /></Svg></TrayIcon>
          <TrayIcon><Svg w={13} h={14}><path d="M6.500 0l6 2v5c0 4-3 6-6 7-3-1-6-3-6-7V2z" fill="#e8f0e0" /><path d="M6.500 2.500l4 1.500v3c0 3-2 4-4 5z" fill="#4cae4c" /></Svg></TrayIcon>
          <TrayIcon><Svg w={14} h={14}><circle cx="7" cy="7" r="6.500" fill="#d9d21c" /><path d="M7 3.500v7M3.500 7h7" stroke="#1a3a20" strokeWidth="2" /></Svg></TrayIcon>
          <TrayIcon><Svg w={14} h={14}><path d="M2 3a8 8 0 0 0 9 9z" fill="#ddd" /><path d="M7 7l5-4" stroke="#ddd" /></Svg></TrayIcon>
          <TrayIcon><Svg w={8} h={13}><path d="M1 3.500l6 6L4 12V1l3 2.500-6 6" stroke="#eee" strokeWidth="1.200" /></Svg></TrayIcon>
          <TrayIcon><Svg w={11} h={14}><rect x="1" y="3" width="9" height="10" fill="#eee" /><path d="M3.500 0v4M7.500 0v4" stroke="#eee" strokeWidth="1.500" /></Svg></TrayIcon>
          <TrayIcon><Svg w={13} h={12}><circle cx="9" cy="5" r="3" fill="#e8932c" /><path d="M1 11h2V8H1zM4 11h2V6H4z" fill="#d8b060" /></Svg></TrayIcon>
          <TrayIcon><Svg w={13} h={12}><path d="M1 4h2l4-3v10L3 8H1z" fill="#eee" /><path d="M9 3c1.500 1.500 1.500 4.500 0 6M11 1.500c2.500 2.500 2.500 6.500 0 9" stroke="#ccc" /></Svg></TrayIcon>
          <Clock>9:47<br />2014/12/28</Clock>
          <ShowDesktop />
        </Tray>
      </Taskbar>

      <Logo>
        <LogoBig $x={0} $y={3} $s={46} $slant>英</LogoBig>
        <LogoBig $x={44} $y={12} $s={36}>盛</LogoBig>
        <LogoBig $x={77} $y={12} $s={36}>网</LogoBig>
        <LogoSmall>育英才 创盛世</LogoSmall>
      </Logo>

      <Sogou>
        <SogouMark>S</SogouMark>
        <SogouBar>
          <span>中</span>
          <Svg w={10} h={11}><path d="M7 0a5.500 5.500 0 1 1-7 8c4 1 7-3 7-8z" fill="#1d6fb8" /></Svg>
          <SogouPunct>°,</SogouPunct>
          <Svg w={14} h={10}><rect x=".5" y=".5" width="13" height="9" rx="1" stroke="#1d6fb8" /><path d="M3 3.500h8M3 6.500h8" stroke="#1d6fb8" strokeDasharray="1 1" /></Svg>
          <Svg w={12} h={12}><circle cx="5" cy="3" r="2.500" fill="#b9c0c8" /><rect x="1" y="6" width="9" height="6" fill="#b9c0c8" /></Svg>
          <Svg w={12} h={11}><path d="M4 0l2 1.500L8 0l4 2-1.500 3H9v6H3V5H1.500L0 2z" fill="#1d6fb8" /></Svg>
          <Svg w={12} h={12}><path d="M11 1L7 4l1 1 3-3a3 3 0 0 1-4 4L2 11 .5 9.500 6 5a3 3 0 0 1 4-4.500z" fill="#1d6fb8" /></Svg>
        </SogouBar>
      </Sogou>
    </Page>
  )
}
